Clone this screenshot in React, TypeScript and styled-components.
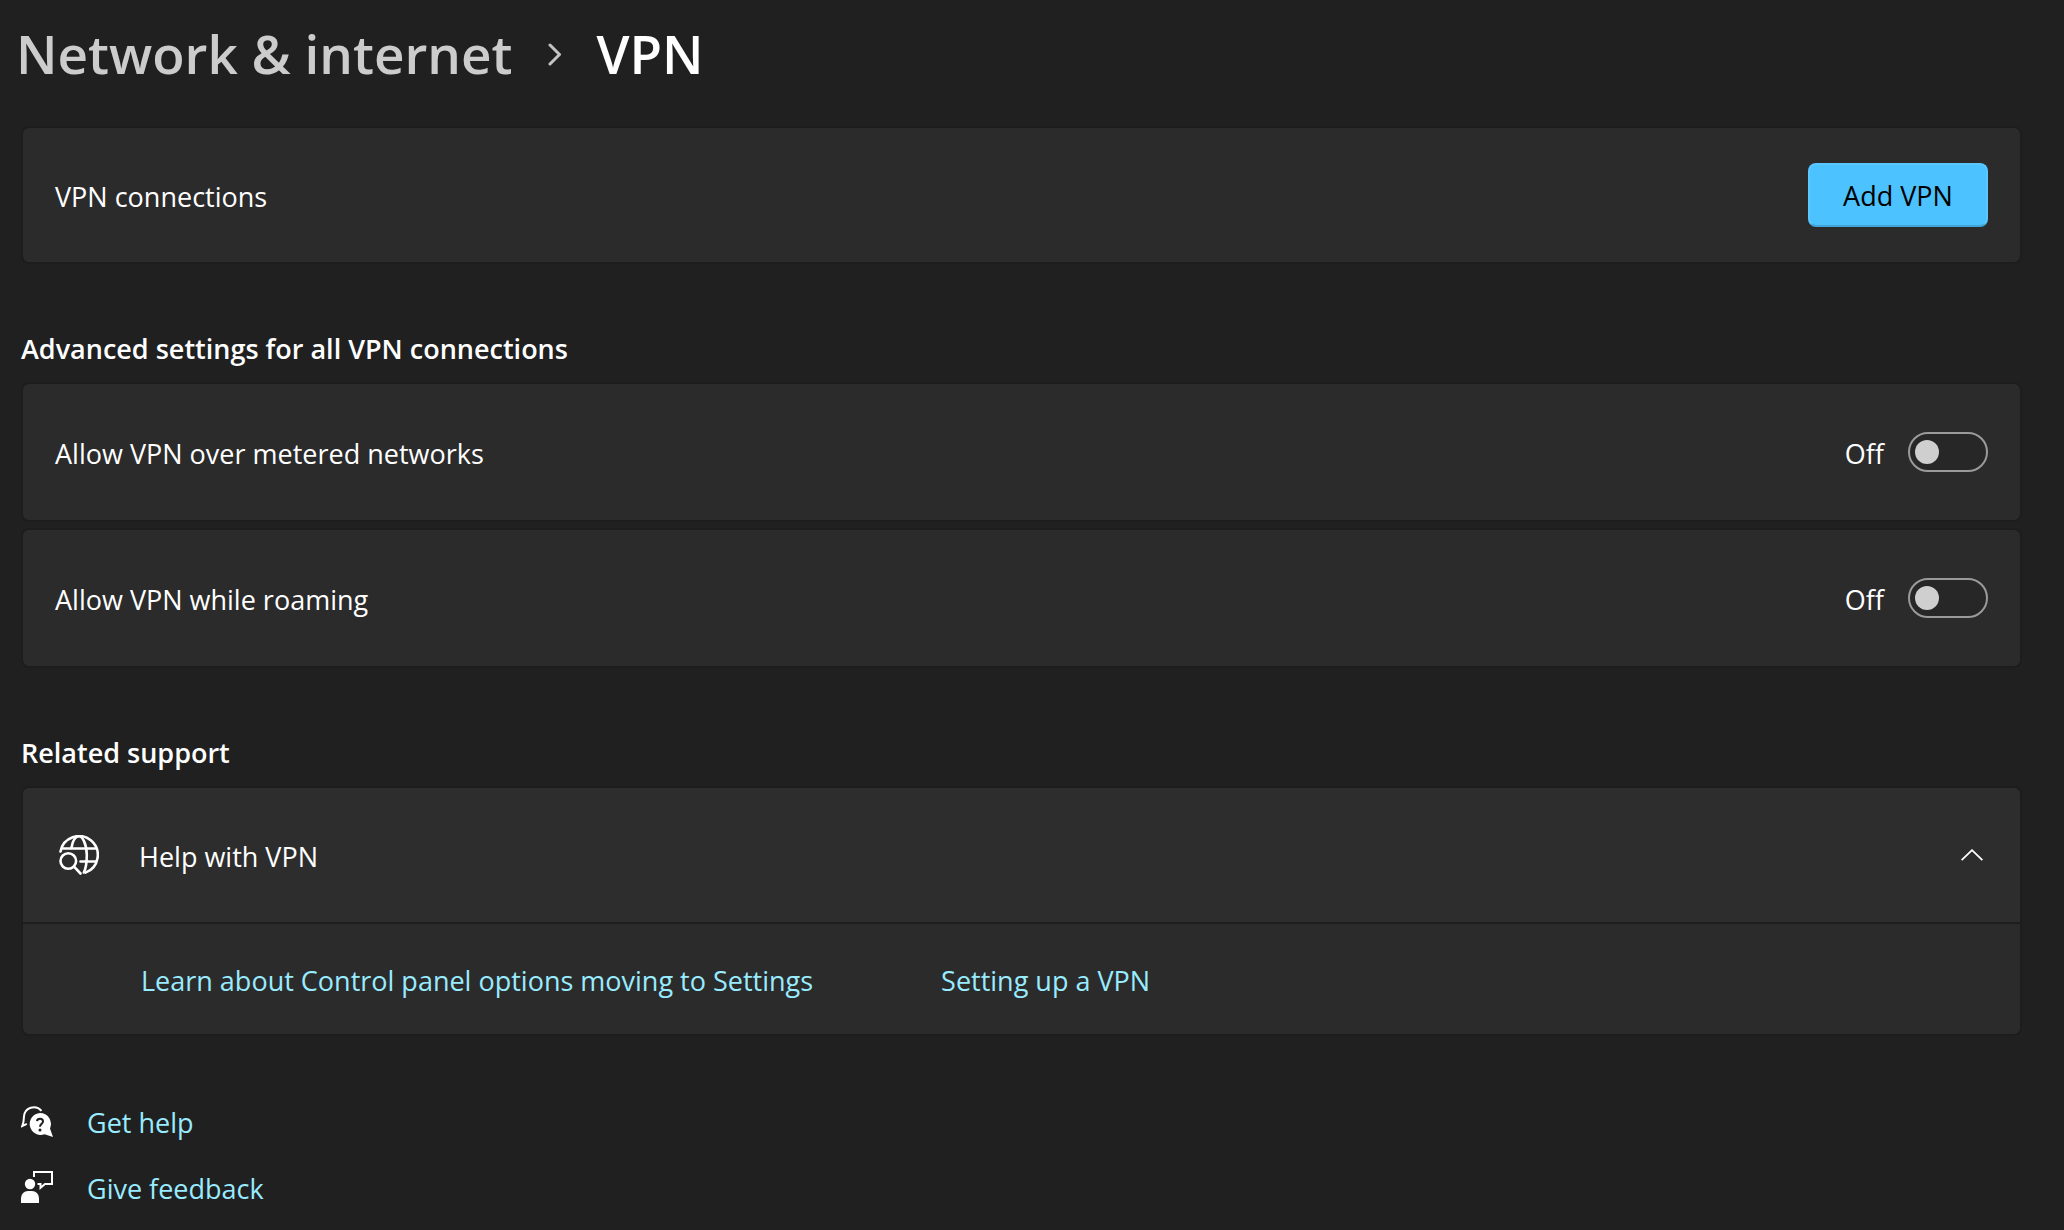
import React, { useId, useState } from "react";
import styled, { createGlobalStyle } from "styled-components";

const GlobalStyle = createGlobalStyle`
  *, *::before, *::after { box-sizing: border-box; }
  body {
    margin: 0;
    background: #202020;
    color: #ffffff;
    font-family: "Segoe UI", "Open Sans", "Noto Sans", sans-serif;
    font-size: 27px;
    line-height: 36px;
  }
`;

const Page = styled.main`
  padding: 18px 42px 16px 21px;
`;

const Breadcrumb = styled.nav`
  display: flex;
  align-items: center;
  gap: 34px;
  height: 72px;
  margin-bottom: 36px;
  font-size: 53px;
  font-weight: 600;
  line-height: 72px;
`;

const ParentLink = styled.a`
  margin-left: -5px;
  color: #cccccc;
  text-decoration: none;
`;

const Current = styled.h1`
  margin: 0;
  font: inherit;
`;

const Section = styled.section`
  display: flex;
  flex-direction: column;
  gap: 6px;
  margin-bottom: 66px;
`;

const SectionTitle = styled.h2`
  margin: 0 0 8px;
  font-size: 27px;
  font-weight: 600;
  line-height: 38px;
`;

const Card = styled.div<{ $tall?: boolean }>`
  display: flex;
  align-items: center;
  justify-content: space-between;
  min-height: ${(p) => (p.$tall ? 140 : 138)}px;
  padding: 0 32px;
  border: 2px solid #1d1d1d;
  border-radius: 8px;
  background: #2b2b2b;
`;

const Text = styled.span`
  padding-top: 4px;
`;

const AccentButton = styled.button`
  width: 180px;
  height: 64px;
  padding: 2px 0 0;
  border: 2px solid #5ac7ff;
  border-bottom-color: #42a6dc;
  border-radius: 8px;
  background: #4cc2ff;
  color: #000000;
  font: inherit;
`;

const SwitchGroup = styled.div`
  display: flex;
  align-items: center;
  gap: 24px;
`;

const Switch = styled.input`
  appearance: none;
  display: flex;
  align-items: center;
  width: 80px;
  height: 40px;
  margin: 0;
  padding: 0 5px;
  border: 2px solid #9a9a9a;
  border-radius: 20px;
  background: #272727;

  &::before {
    content: "";
    width: 24px;
    height: 24px;
    border-radius: 50%;
    background: #cfcfcf;
  }
  &:checked {
    justify-content: flex-end;
    border-color: #4cc2ff;
    background: #4cc2ff;
  }
  &:checked::before { background: #000000; }
`;

const Expander = styled.div`
  border: 2px solid #1d1d1d;
  border-radius: 8px;
  background: #2b2b2b;
  overflow: hidden;
`;

const ExpanderHeader = styled.button`
  display: flex;
  align-items: center;
  width: 100%;
  height: 134px;
  padding: 0 37px 0 36px;
  border: 0;
  background: #2d2d2d;
  color: inherit;
  font: inherit;
  text-align: left;
`;

const ExpanderTitle = styled(Text)`
  flex: 1;
  margin-left: 40px;
`;

const ExpanderBody = styled.div`
  display: flex;
  align-items: center;
  gap: 128px;
  height: 112px;
  padding: 0 118px;
  border-top: 2px solid #1d1d1d;
`;

const Link = styled.a`
  padding-top: 4px;
  color: #99ebff;
  text-decoration: none;
`;

const FooterLinks = styled.footer`
  display: flex;
  flex-direction: column;
  gap: 28px;
`;

const FooterRow = styled.div`
  display: flex;
  align-items: center;
  gap: 34px;
  height: 38px;
`;

function BreadcrumbChevron() {
  return (
    <svg width="16" height="24" viewBox="0 0 16 24" fill="none" stroke="#c4c4c4" strokeWidth="3" strokeLinecap="round" strokeLinejoin="round" aria-hidden="true">
      <path d="M3 3 12.5 12.5 3 22" />
    </svg>
  );
}

function GlobeSearchIcon() {
  return (
    <svg width="40" height="40" viewBox="0 0 40 40" fill="none" stroke="#ffffff" strokeWidth="2.6" strokeLinecap="round" aria-hidden="true">
      <path d="M1.5 16.5A18.8 18.8 0 1 1 26.5 37.6" />
      <path d="M4 13.5H36.5" />
      <path d="M21.5 26.5H36.5" />
      <path d="M12.4 13C13.6 6 16.6 1.3 20 1.3S27.6 8.5 27.8 20C27.8 28 26.6 34 24.8 37.5" />
      <circle cx="9.3" cy="26" r="7.8" />
      <path d="M15 31.7 21.5 38.5" />
    </svg>
  );
}

function CollapseIcon() {
  return (
    <svg width="22" height="12" viewBox="0 0 22 12" fill="none" stroke="#ffffff" strokeWidth="1.8" aria-hidden="true">
      <path d="M.6 11.2 11 1.2 21.4 11.2" />
    </svg>
  );
}

function HelpIcon() {
  return (
    <svg width="32" height="32" viewBox="0 0 32 32" fill="none" aria-hidden="true">
      <path d="M20.5 5.8A10 10 0 0 0 2.9 11.8C3 14.5 2.8 17 1.2 21L5.8 18.8" stroke="#ffffff" strokeWidth="2" />
      <path d="M19 8A11 11 0 1 0 23.5 29.3L32 32 29 23.5A11 11 0 0 0 19 8Z" fill="#ffffff" />
      <path d="M16 16.2C16.2 14.4 17.5 13.8 19 13.8 20.8 13.8 22 14.8 22 16.4 22 18.8 19 18.9 19 21.8" stroke="#202020" strokeWidth="2" />
      <circle cx="19" cy="25" r="1.5" fill="#202020" />
    </svg>
  );
}

function FeedbackIcon() {
  return (
    <svg width="32" height="32" viewBox="0 0 32 32" fill="none" aria-hidden="true">
      <circle cx="9" cy="13" r="5.2" fill="#ffffff" />
      <path d="M0 32V27A7 7 0 0 1 7 20H11A7 7 0 0 1 18 27V32Z" fill="#ffffff" />
      <path d="M13 6V1H31V13H24L19.5 16.8V13H16.5" stroke="#ffffff" strokeWidth="2" />
    </svg>
  );
}

function SwitchRow({ label }: { label: string }) {
  const id = useId();
  const [on, setOn] = useState(false);
  return (
    <Card $tall>
      <Text as="label" htmlFor={id}>{label}</Text>
      <SwitchGroup>
        <Text>{on ? "On" : "Off"}</Text>
        <Switch id={id} type="checkbox" role="switch" checked={on} onChange={(e) => setOn(e.target.checked)} />
      </SwitchGroup>
    </Card>
  );
}

export default function App() {
  const [open, setOpen] = useState(true);
  return (
    <>
      <GlobalStyle />
      <Page>
        <Breadcrumb aria-label="Breadcrumb">
          <ParentLink href="#network">Network &amp; internet</ParentLink>
          <BreadcrumbChevron />
          <Current>VPN</Current>
        </Breadcrumb>

        <Section>
          <Card>
            <Text>VPN connections</Text>
            <AccentButton type="button">Add VPN</AccentButton>
          </Card>
        </Section>

        <Section>
          <SectionTitle>Advanced settings for all VPN connections</SectionTitle>
          <SwitchRow label="Allow VPN over metered networks" />
          <SwitchRow label="Allow VPN while roaming" />
        </Section>

        <Section>
          <SectionTitle>Related support</SectionTitle>
          <Expander>
            <ExpanderHeader type="button" aria-expanded={open} onClick={() => setOpen(!open)}>
              <GlobeSearchIcon />
              <ExpanderTitle>Help with VPN</ExpanderTitle>
              <CollapseIcon />
            </ExpanderHeader>
            {open && (
              <ExpanderBody>
                <Link href="#control-panel">Learn about Control panel options moving to Settings</Link>
                <Link href="#vpn-setup">Setting up a VPN</Link>
              </ExpanderBody>
            )}
          </Expander>
        </Section>

        <FooterLinks>
          <FooterRow>
            <HelpIcon />
            <Link href="#help">Get help</Link>
          </FooterRow>
          <FooterRow>
            <FeedbackIcon />
            <Link href="#feedback">Give feedback</Link>
          </FooterRow>
        </FooterLinks>
      </Page>
    </>
  );
}
